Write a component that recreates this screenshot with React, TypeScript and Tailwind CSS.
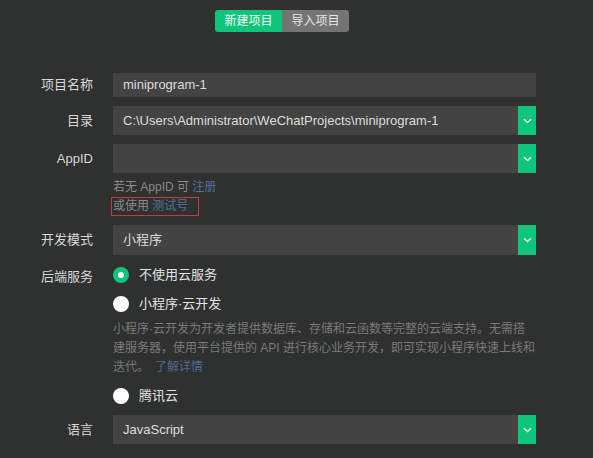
import React from "react";

const FONT = { fontFamily: '"Liberation Sans", Arial, "Noto Sans CJK SC", sans-serif' };

function Chevron() {
  return (
    <svg width="9" height="6" viewBox="0 0 9 6" fill="none">
      <path d="M1 1.2 L4.5 4.6 L8 1.2" stroke="#e8fff3" strokeWidth="1.4" />
    </svg>
  );
}

function Select({ value, h = "h-[29px]" }: { value: string; h?: string }) {
  return (
    <div className={`flex ${h} w-[423px]`}>
      <div className="flex flex-1 items-center bg-[#434343] pl-[10px] text-[13px] text-[#dcdcdc]">
        {value}
      </div>
      <div className="flex w-[18px] items-center justify-center bg-[#0fc57c]">
        <Chevron />
      </div>
    </div>
  );
}

function Label({ children }: { children: React.ReactNode }) {
  return (
    <div className="w-[93px] shrink-0 pr-0 text-right text-[13px] text-[#d8d8d8]">{children}</div>
  );
}

function Radio({ checked, label }: { checked?: boolean; label: string }) {
  return (
    <div className="flex items-center">
      {checked ? (
        <div className="flex h-[16px] w-[16px] items-center justify-center rounded-full bg-[#0fc57c]">
          <div className="h-[6px] w-[6px] rounded-full bg-white" />
        </div>
      ) : (
        <div className="h-[16px] w-[16px] rounded-full bg-white" />
      )}
      <span className="ml-[10px] text-[13px] text-[#e2e2e2]">{label}</span>
    </div>
  );
}

export default function App() {
  return (
    <div className="h-[458px] w-[593px] bg-[#2f3030]" style={FONT}>
      <div className="flex pl-[215px] pt-[10px]">
        <div className="flex h-[22px] overflow-hidden rounded-[3px] text-[12px] leading-[22px]">
          <div className="w-[67px] bg-[#0fc57c] text-center text-[#f4fff9]">新建项目</div>
          <div className="w-[67px] bg-[#747474] text-center text-[#e6e6e6]">导入项目</div>
        </div>
      </div>

      <div className="mt-[41px] flex flex-col">
        <div className="flex items-center gap-[20px]">
          <Label>项目名称</Label>
          <div className="flex h-[24px] w-[423px] items-center bg-[#434343] pl-[10px] text-[13px] text-[#dcdcdc]">
            miniprogram-1
          </div>
        </div>

        <div className="mt-[9px] flex items-center gap-[20px]">
          <Label>目录</Label>
          <Select value="C:\Users\Administrator\WeChatProjects\miniprogram-1" />
        </div>

        <div className="mt-[9px] flex items-center gap-[20px]">
          <Label>AppID</Label>
          <Select value="" />
        </div>

        <div className="ml-[113px] mt-[5px] text-[12px] leading-[19px] text-[#8a8a8a]">
          <div>
            若无 AppID 可 <span className="text-[#56729c]">注册</span>
          </div>
          <div className="-ml-[2px] w-[88px] border border-[#c43c3c] pl-[1px] leading-[17px]">
            或使用 <span className="text-[#56729c]">测试号</span>
          </div>
        </div>

        <div className="mt-[9px] flex items-center gap-[20px]">
          <Label>开发模式</Label>
          <Select value="小程序" h="h-[30px]" />
        </div>

        <div className="mt-[9px] flex gap-[20px]">
          <div className="pt-[3px]">
            <Label>后端服务</Label>
          </div>
          <div className="flex w-[423px] flex-col">
            <div className="flex h-[22px] items-center">
              <Radio checked label="不使用云服务" />
            </div>
            <div className="mt-[7px] flex h-[22px] items-center">
              <Radio label="小程序·云开发" />
            </div>
            <div className="mt-[5px] text-[12px] leading-[19px] text-[#7a7a7a]">
              小程序·云开发为开发者提供数据库、存储和云函数等完整的云端支持。无需搭建服务器，使用平台提供的 API 进行核心业务开发，即可实现小程序快速上线和迭代。
              <span className="ml-[6px] inline-block text-[#4f6a92]">了解详情</span>
            </div>
            <div className="mt-[8px] flex h-[22px] items-center">
              <Radio label="腾讯云" />
            </div>
          </div>
        </div>

        <div className="mt-[8px] flex items-center gap-[20px]">
          <Label>语言</Label>
          <Select value="JavaScript" />
        </div>
      </div>
    </div>
  );
}
